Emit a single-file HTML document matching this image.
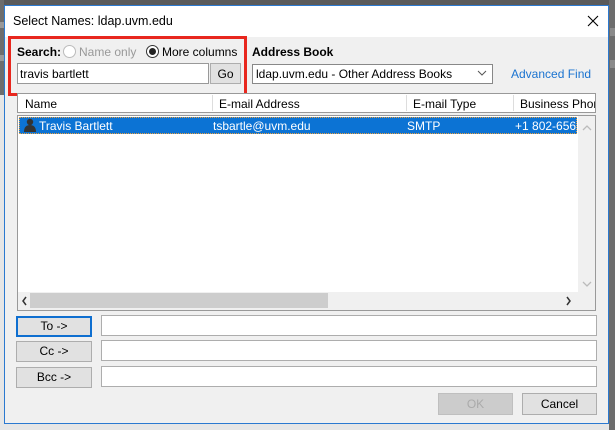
<!DOCTYPE html>
<html><head><style>
*{box-sizing:border-box;margin:0;padding:0}
body{width:615px;height:430px;background:#e6e6e6;position:relative;overflow:hidden;font-family:"Liberation Sans",Arial,sans-serif;font-size:12px;color:#000}
.a{position:absolute}
.dlg{left:4px;top:5px;width:605px;height:419px;background:#f0f0f0;border:1px solid #2b79d0}
.title{left:0;top:0;width:603px;height:31px;background:#fff}
.btn{background:#e1e1e1;border:1px solid #adadad;text-align:center;line-height:18px}
.inp{background:#fff;border:1px solid #adadad}
.radio{width:13px;height:13px;border-radius:50%;border:1px solid #333;background:#fff}
</style></head><body>
<div class="a" style="left:0;top:0;width:615px;height:5px;background:#5a5a5a"></div>
<div class="a" style="left:0;top:0;width:4px;height:95px;background:#6d6d6d"></div>
<div class="a" style="left:0;top:22px;width:4px;height:6px;background:#999"></div>
<div class="a" style="left:0;top:55px;width:4px;height:6px;background:#999"></div>
<div class="a" style="left:609px;top:0;width:6px;height:430px;background:#6d6d6d"></div>
<div class="a" style="left:610px;top:28px;width:5px;height:8px;background:#8a8a8a"></div>
<div class="a" style="left:610px;top:60px;width:5px;height:8px;background:#8a8a8a"></div>
<div class="a dlg">
 <div class="a title"></div>
 <div class="a" style="left:8px;top:8px;font-size:12.5px">Select Names: ldap.uvm.edu</div>
 <svg class="a" style="left:582px;top:9px" width="12" height="12"><path d="M1 1L11 11M11 1L1 11" stroke="#000" stroke-width="1.1"/></svg>
</div>
<div class="a" style="left:8px;top:36px;width:239px;height:60px;border:3px solid #e8271e"></div>
<div class="a" style="left:17px;top:45px;font-weight:bold">Search:</div>
<div class="a radio" style="left:63px;top:45px;border-color:#bbb"></div>
<div class="a" style="left:79px;top:45px;color:#999">Name only</div>
<div class="a radio" style="left:146px;top:45px"><div class="a" style="left:2px;top:2px;width:7px;height:7px;border-radius:50%;background:#222"></div></div>
<div class="a" style="left:162px;top:45px">More columns</div>
<div class="a inp" style="left:17px;top:63px;width:192px;height:21px;border-color:#999"></div>
<div class="a" style="left:20px;top:67px">travis bartlett</div>
<div class="a btn" style="left:210px;top:63px;width:31px;height:21px;line-height:20px">Go</div>
<div class="a" style="left:252px;top:45px;font-weight:bold">Address Book</div>
<div class="a inp" style="left:252px;top:64px;width:241px;height:20px;border-color:#888"></div>
<div class="a" style="left:256px;top:67px">ldap.uvm.edu - Other Address Books</div>
<svg class="a" style="left:477px;top:70px" width="10" height="7"><path d="M1 1L5 5L9 1" stroke="#555" fill="none"/></svg>
<div class="a" style="left:511px;top:67px;color:#1a73d0">Advanced Find</div>
<div class="a" style="left:17px;top:93px;width:579px;height:20px;background:#fff;border:1px solid #999"></div>
<div class="a" style="left:212px;top:95px;width:1px;height:16px;background:#ddd"></div>
<div class="a" style="left:406px;top:95px;width:1px;height:16px;background:#ddd"></div>
<div class="a" style="left:513px;top:95px;width:1px;height:16px;background:#ddd"></div>
<div class="a" style="left:25px;top:97px">Name</div>
<div class="a" style="left:219px;top:97px">E-mail Address</div>
<div class="a" style="left:413px;top:97px">E-mail Type</div>
<div class="a" style="left:520px;top:97px;width:75px;overflow:hidden;white-space:nowrap">Business Phone</div>
<div class="a" style="left:17px;top:115px;width:579px;height:196px;background:#fff;border:1px solid #999"></div>
<div class="a" style="left:19px;top:117px;width:558px;height:17px;background:#0c73d4;border:1px dotted #e8a040"></div>
<svg class="a" style="left:24px;top:118px" width="12" height="14"><circle cx="6" cy="4" r="3.2" fill="#333"/><path d="M0 14Q0 7 6 7Q12 7 12 14Z" fill="#333"/></svg>
<div class="a" style="left:39px;top:119px;color:#fff">Travis Bartlett</div>
<div class="a" style="left:213px;top:119px;color:#fff">tsbartle@uvm.edu</div>
<div class="a" style="left:407px;top:119px;color:#fff">SMTP</div>
<div class="a" style="left:515px;top:119px;color:#fff;width:61px;overflow:hidden;white-space:nowrap">+1 802-656-0000</div>
<div class="a" style="left:578px;top:116px;width:17px;height:177px;background:#f0f0f0"></div>
<div class="a" style="left:18px;top:292px;width:577px;height:18px;background:#f0f0f0"></div>
<div class="a" style="left:30px;top:293px;width:298px;height:15px;background:#cdcdcd"></div>
<svg class="a" style="left:582px;top:124px" width="10" height="7"><path d="M1 6L5 2L9 6" stroke="#bbb" fill="none" stroke-width="1.3"/></svg>
<svg class="a" style="left:582px;top:281px" width="10" height="7"><path d="M1 1L5 5L9 1" stroke="#bbb" fill="none" stroke-width="1.3"/></svg>
<svg class="a" style="left:21px;top:296px" width="7" height="10"><path d="M5 1L2 5L5 9" stroke="#333" fill="none" stroke-width="1.5"/></svg>
<svg class="a" style="left:565px;top:296px" width="7" height="10"><path d="M2 1L5 5L2 9" stroke="#333" fill="none" stroke-width="1.5"/></svg>
<div class="a btn" style="left:16px;top:316px;width:76px;height:21px;border:2px solid #0f6fd0;line-height:17px">To -&gt;</div>
<div class="a inp" style="left:101px;top:315px;width:496px;height:21px"></div>
<div class="a btn" style="left:16px;top:341px;width:76px;height:21px">Cc -&gt;</div>
<div class="a inp" style="left:101px;top:340px;width:496px;height:21px"></div>
<div class="a btn" style="left:16px;top:367px;width:76px;height:21px">Bcc -&gt;</div>
<div class="a inp" style="left:101px;top:366px;width:496px;height:21px"></div>
<div class="a btn" style="left:438px;top:393px;width:75px;height:22px;color:#aaa;background:#ccc;border-color:#bfbfbf;line-height:20px">OK</div>
<div class="a btn" style="left:522px;top:393px;width:75px;height:22px;line-height:20px">Cancel</div>
</body></html>
